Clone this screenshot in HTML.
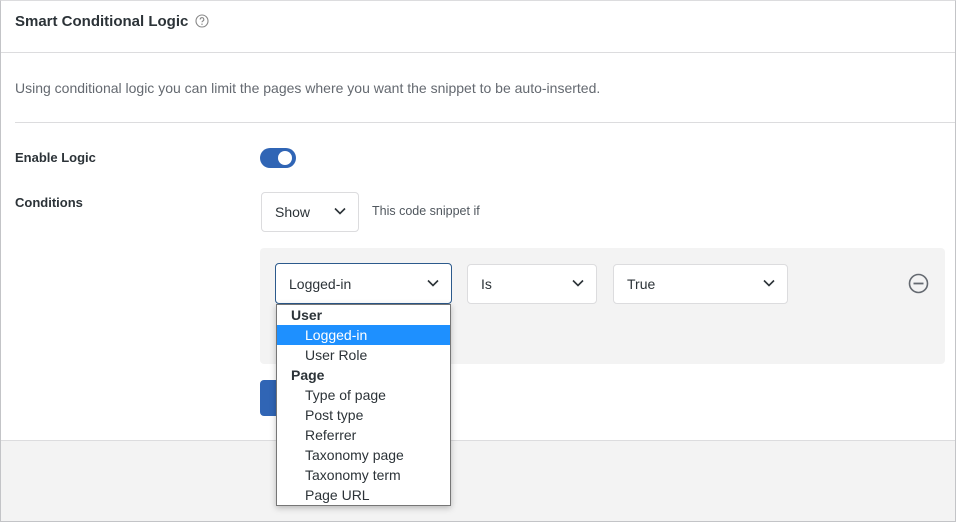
<!DOCTYPE html>
<html><head><style>
*{box-sizing:border-box;margin:0;padding:0}
body{width:956px;height:522px;background:#fff;font-family:"Liberation Sans",sans-serif;position:relative;overflow:hidden;color:#3c434a}
.abs{position:absolute}
.frame{left:0;top:0;width:956px;height:522px;border:1px solid #c3c4c7;border-top:1px solid #dcdcde}
.sel{position:absolute;background:#fff;border:1px solid #dcdcde;border-radius:4px;font-size:14px;color:#2c3338;padding-left:13px;display:flex;align-items:center}
.chev{position:absolute;right:12px;top:50%;margin-top:-5px}
.dd{left:276px;top:304px;width:175px;height:202px;background:#fff;border:1px solid #767676;box-shadow:0 2px 6px rgba(0,0,0,.25);font-size:14px;color:#2c3338}
.dd div{height:20px;line-height:20px;padding-left:28px}
.dd .g{font-weight:bold;padding-left:14px}
.dd .hl{background:#1e90ff;color:#fff}
</style></head><body>
<div class="abs" style="left:1px;top:440px;width:954px;height:81px;background:#f3f3f3;border-top:1px solid #dcdcde"></div>
<div class="abs frame"></div>
<div class="abs" style="left:15px;top:13px;font-size:15px;font-weight:bold;color:#2c3338">Smart Conditional Logic</div>
<svg class="abs" style="left:195px;top:14px" width="14" height="14" viewBox="0 0 14 14"><circle cx="7" cy="7" r="6" fill="none" stroke="#888" stroke-width="1.1"/><path d="M5.2 5.5a1.8 1.8 0 1 1 2.5 1.6c-.5.3-.7.6-.7 1.2" fill="none" stroke="#888" stroke-width="1.1"/><circle cx="7" cy="10.2" r=".7" fill="#888"/></svg>
<div class="abs" style="left:1px;top:52px;width:954px;height:1px;background:#dcdcde"></div>
<div class="abs" style="left:15px;top:80px;font-size:14px;color:#646970">Using conditional logic you can limit the pages where you want the snippet to be auto-inserted.</div>
<div class="abs" style="left:15px;top:122px;width:940px;height:1px;background:#dcdcde"></div>
<div class="abs" style="left:15px;top:150px;font-size:13px;font-weight:bold;color:#2c3338">Enable Logic</div>
<div class="abs" style="left:260px;top:148px;width:36px;height:20px;border-radius:10px;background:#3065b5"></div>
<div class="abs" style="left:278px;top:151px;width:14px;height:14px;border-radius:7px;background:#fff"></div>
<div class="abs" style="left:15px;top:195px;font-size:13px;font-weight:bold;color:#2c3338">Conditions</div>
<div class="sel" style="left:261px;top:192px;width:98px;height:40px">Show<svg class="chev" width="12" height="8" viewBox="0 0 12 8"><path d="M1 1.5l5 5 5-5" fill="none" stroke="#2c3338" stroke-width="1.6"/></svg></div>
<div class="abs" style="left:372px;top:204px;font-size:12.5px;color:#50575e">This code snippet if</div>
<div class="abs" style="left:260px;top:248px;width:685px;height:116px;background:#f3f3f3;border-radius:4px"></div>
<div class="sel" style="left:275px;top:263px;width:177px;height:41px;border-color:#2c5a8c">Logged-in<svg class="chev" width="12" height="8" viewBox="0 0 12 8"><path d="M1 1.5l5 5 5-5" fill="none" stroke="#2c3338" stroke-width="1.6"/></svg></div>
<div class="sel" style="left:467px;top:264px;width:130px;height:40px">Is<svg class="chev" width="12" height="8" viewBox="0 0 12 8"><path d="M1 1.5l5 5 5-5" fill="none" stroke="#2c3338" stroke-width="1.6"/></svg></div>
<div class="sel" style="left:613px;top:264px;width:175px;height:40px">True<svg class="chev" width="12" height="8" viewBox="0 0 12 8"><path d="M1 1.5l5 5 5-5" fill="none" stroke="#2c3338" stroke-width="1.6"/></svg></div>
<svg class="abs" style="left:908px;top:273px" width="21" height="21" viewBox="0 0 21 21"><circle cx="10.5" cy="10.5" r="9" fill="none" stroke="#646970" stroke-width="1.6"/><path d="M5.5 10.5h10" stroke="#646970" stroke-width="1.8"/></svg>
<div class="abs" style="left:260px;top:380px;width:30px;height:36px;background:#3065b5;border-radius:4px"></div>
<div class="abs dd">
<div class="g">User</div>
<div class="hl">Logged-in</div>
<div>User Role</div>
<div class="g">Page</div>
<div>Type of page</div>
<div>Post type</div>
<div>Referrer</div>
<div>Taxonomy page</div>
<div>Taxonomy term</div>
<div>Page URL</div>
</div>
</body></html>
